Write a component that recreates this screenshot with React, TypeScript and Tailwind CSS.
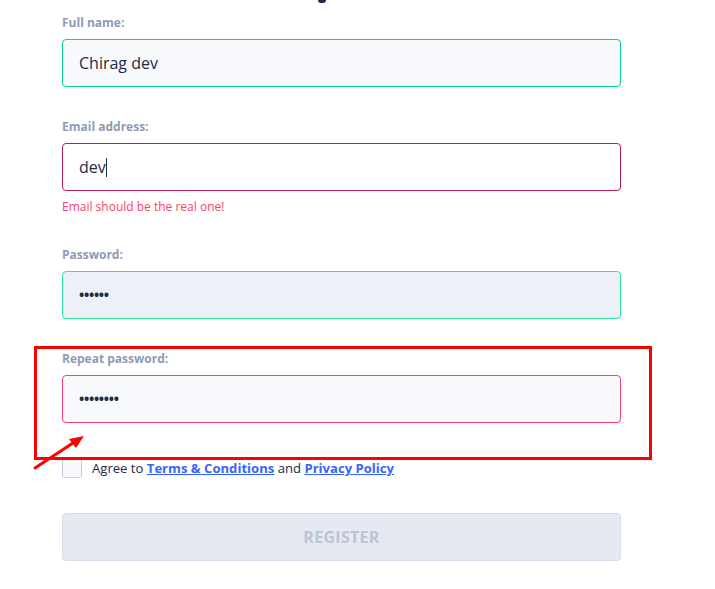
import { useState } from "react";

const font = { fontFamily: '"Open Sans", "Liberation Sans", sans-serif' };

function Field({
  label,
  value,
  type = "text",
  tone,
  bg,
  error,
  caret,
}: {
  label: string;
  value: string;
  type?: string;
  tone: string;
  bg: string;
  error?: string;
  caret?: boolean;
}) {
  return (
    <div>
      <label className="block text-[12px] leading-4 font-bold text-[#8f9bb3] mb-2">{label}</label>
      <div className={`relative h-12 rounded-[4px] border ${tone} ${bg} flex items-center px-4`}>
        {type === "password" ? (
          <span className="text-[#222b45] text-[14px] font-bold tracking-[-0.3px] leading-none">
            {"•".repeat(value.length)}
          </span>
        ) : (
          <span className="text-[#222b45] text-[16px] leading-5">
            {value}
            {caret && <span className="inline-block w-px h-[19px] bg-[#222b45] align-[-4px]" />}
          </span>
        )}
      </div>
      {error && <p className="mt-2 text-[12px] leading-4 text-[#ff3d71]">{error}</p>}
    </div>
  );
}

export default function App() {
  const [agree, setAgree] = useState(false);

  return (
    <div className="w-[715px] h-[589px] bg-white overflow-hidden" style={font}>
      <div className="relative w-[559px] ml-[62px]">
        {/* tail of the heading glyph cut off at the top */}
        <div className="h-[3px] w-[8px] ml-[256px] bg-[#222b45] rounded-b-full" />

        <div className="mt-[12px] flex flex-col gap-8">
          <Field label="Full name:" value="Chirag dev" tone="border-[#00d68f]" bg="bg-[#f7f9fc]" />
          <Field
            label="Email address:"
            value="dev"
            caret
            tone="border-[#b81d5b]"
            bg="bg-white"
            error="Email should be the real one!"
          />
          <Field label="Password:" value="••••••" type="password" tone="border-[#2ce69b]" bg="bg-[#edf1f7]" />
          <Field
            label="Repeat password:"
            value="••••••••"
            type="password"
            tone="border-[#ff3d71]"
            bg="bg-[#f7f9fc]"
          />
        </div>

        <label className="mt-[35px] flex items-center gap-[10px] cursor-pointer">
          <button
            type="button"
            onClick={() => setAgree(!agree)}
            className="w-5 h-5 rounded-[3px] border border-[#c5cee0] bg-[#f7f9fc]"
          />
          <span className="text-[13.1px] leading-5 text-[#222b45]">
            Agree to{" "}
            <a className="font-bold text-[#3366ff] underline">Terms &amp; Conditions</a> and{" "}
            <a className="font-bold text-[#3366ff] underline">Privacy Policy</a>
          </span>
        </label>

        <button
          type="button"
          disabled
          className="mt-[35px] w-full h-12 rounded-[4px] border border-[#d8dee9] bg-[#e4e9f2] text-[#bcc5d6] text-[16px] font-bold tracking-[0.3px]"
        >
          REGISTER
        </button>

        {/* annotation overlay */}
        <div className="absolute left-[-28px] top-[346px] w-[618px] h-[114px] border-[3px] border-[#ff0000] pointer-events-none" />
        <svg
          className="absolute left-[-30px] top-[430px] pointer-events-none"
          width="60"
          height="42"
          viewBox="0 0 60 42"
        >
          <line x1="3" y1="38" x2="44" y2="11" stroke="#ff0000" strokeWidth="3" strokeLinecap="round" />
          <polygon points="52,6 37,9 44,18" fill="#ff0000" />
        </svg>
      </div>
    </div>
  );
}
